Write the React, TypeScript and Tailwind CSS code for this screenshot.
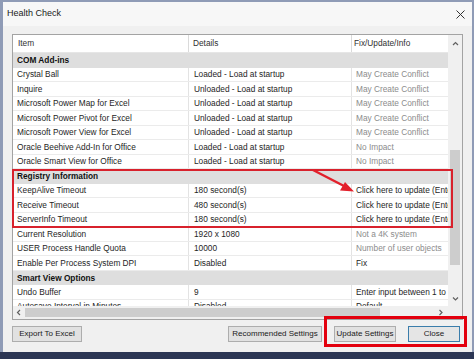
import React from 'react';

type Row =
  | { group: string }
  | { item: string; details: string; fix: string; dim?: boolean };

const ROWS: Row[] = [
  { group: 'COM Add-ins' },
  { item: 'Crystal Ball', details: 'Loaded - Load at startup', fix: 'May Create Conflict', dim: true },
  { item: 'Inquire', details: 'Unloaded - Load at startup', fix: 'May Create Conflict', dim: true },
  { item: 'Microsoft Power Map for Excel', details: 'Unloaded - Load at startup', fix: 'May Create Conflict', dim: true },
  { item: 'Microsoft Power Pivot for Excel', details: 'Unloaded - Load at startup', fix: 'May Create Conflict', dim: true },
  { item: 'Microsoft Power View for Excel', details: 'Unloaded - Load at startup', fix: 'May Create Conflict', dim: true },
  { item: 'Oracle Beehive Add-In for Office', details: 'Loaded - Load at startup', fix: 'No Impact', dim: true },
  { item: 'Oracle Smart View for Office', details: 'Loaded - Load at startup', fix: 'No Impact', dim: true },
  { group: 'Registry Information' },
  { item: 'KeepAlive Timeout', details: '180 second(s)', fix: 'Click here to update (Enter value)' },
  { item: 'Receive Timeout', details: '480 second(s)', fix: 'Click here to update (Enter value)' },
  { item: 'ServerInfo Timeout', details: '180 second(s)', fix: 'Click here to update (Enter value)' },
  { item: 'Current Resolution', details: '1920 x 1080', fix: 'Not a 4K system', dim: true },
  { item: 'USER Process Handle Quota', details: '10000', fix: 'Number of user objects', dim: true },
  { item: 'Enable Per Process System DPI', details: 'Disabled', fix: 'Fix' },
  { group: 'Smart View Options' },
  { item: 'Undo Buffer', details: '9', fix: 'Enter input between 1 to 100' },
  { item: 'Autosave Interval in Minutes', details: 'Disabled', fix: 'Default' },
];

const Chevron = ({ dir }: { dir: 'up' | 'down' | 'left' | 'right' }) => {
  const d = {
    up: 'M1 4 L3.5 1.5 L6 4',
    down: 'M1 1.5 L3.5 4 L6 1.5',
    left: 'M4 1 L1.5 3.5 L4 6',
    right: 'M1.5 1 L4 3.5 L1.5 6',
  }[dir];
  const w = dir === 'up' || dir === 'down' ? 7 : 5.5;
  const h = dir === 'up' || dir === 'down' ? 5.5 : 7;
  return (
    <svg width={w} height={h} viewBox={`0 0 ${w} ${h}`}>
      <path d={d} fill="none" stroke="#606060" strokeWidth="1.2" />
    </svg>
  );
};

export default function App() {
  return (
    <div className="relative w-[474px] h-[359px] overflow-hidden flex flex-col font-['Liberation_Sans',Arial,sans-serif] text-[#1e1e1e]">
      <div className="flex-1 flex flex-col bg-[#f0f0f0] border-t-2 border-l-[3px] border-r-2 border-[#8f9bb6]">
        {/* title */}
        <div className="h-[24px] shrink-0 bg-[#f7f7f7] flex items-center justify-between pl-[4px] pr-[7px]">
          <span className="text-[9px] text-[#202020]">Health Check</span>
          <svg width="9" height="9" viewBox="0 0 9 9">
            <path d="M0.5 0.5 L8.5 8.5 M8.5 0.5 L0.5 8.5" stroke="#333" strokeWidth="1" />
          </svg>
        </div>

        {/* list */}
        <div className="px-[9px] pt-[8px]">
          <div className="h-[286px] border border-[#a3a3a3] bg-white flex flex-col">
            <div className="h-[271px] flex">
              <div className="w-[435px] shrink-0 overflow-hidden text-[8.3px] whitespace-nowrap">
                <div className="h-[18px] flex items-center bg-white border-b border-[#e6e6e6] text-[#303030]">
                  <div className="w-[176px] shrink-0 h-full flex items-center pl-[5px] border-r border-[#dadada]">Item</div>
                  <div className="w-[163px] shrink-0 h-full flex items-center pl-[4px] border-r border-[#dadada]">Details</div>
                  <div className="w-[140px] shrink-0 h-full flex items-center pl-[2px]">Fix/Update/Info</div>
                </div>
                {ROWS.map((r, i) =>
                  'group' in r ? (
                    <div key={i} className="h-[14.5px] flex items-center bg-[#dedede] pl-[4px] font-bold text-[#111]">
                      {r.group}
                    </div>
                  ) : (
                    <div key={i} className="h-[14.5px] flex items-center border-b border-[#ebebeb]">
                      <div className="w-[176px] shrink-0 h-full flex items-center pl-[4px] border-r border-[#e3e3e3]">{r.item}</div>
                      <div className="w-[163px] shrink-0 h-full flex items-center pl-[5px] border-r border-[#e3e3e3]">{r.details}</div>
                      <div className={`w-[140px] shrink-0 h-full flex items-center pl-[4px] ${r.dim ? 'text-[#8c8c8c]' : 'text-[#1e1e1e]'}`}>{r.fix}</div>
                    </div>
                  )
                )}
              </div>
              {/* vertical scrollbar */}
              <div className="w-[14px] bg-[#f0f0f0] flex flex-col">
                <div className="h-[17px] flex items-center justify-center"><Chevron dir="up" /></div>
                <div className="flex-1 pt-[98px] px-[2px]">
                  <div className="h-[115px] bg-[#cdcdcd]" />
                </div>
                <div className="h-[14px] flex items-center justify-center"><Chevron dir="down" /></div>
              </div>
            </div>
            {/* horizontal scrollbar */}
            <div className="h-[13px] flex bg-[#f0f0f0]">
              <div className="w-[435px] flex items-center">
                <div className="w-[12px] flex justify-center"><Chevron dir="left" /></div>
                <div className="w-[355px] h-[9px] bg-[#cdcdcd]" />
                <div className="flex-1" />
                <div className="w-[14px] flex justify-center"><Chevron dir="right" /></div>
              </div>
              <div className="w-[14px]" />
            </div>
          </div>
        </div>

        {/* buttons */}
        <div className="mt-[6px] h-[16px] flex pl-[9px] pr-[12px] text-[8px] text-[#1a1a1a]">
          <button className="w-[70px] h-full bg-[#e1e1e1] border border-[#adadad] flex items-center justify-center">Export To Excel</button>
          <div className="flex-1" />
          <button className="w-[94px] h-full bg-[#e1e1e1] border border-[#adadad] flex items-center justify-center">Recommended Settings</button>
          <button className="ml-[12px] w-[62px] h-full bg-[#e1e1e1] border border-[#adadad] flex items-center justify-center">Update Settings</button>
          <button className="ml-[12px] w-[52px] h-full bg-[#e5e5e5] border border-[#3b7dab] flex items-center justify-center">Close</button>
        </div>
      </div>
      <div className="h-[7px] shrink-0 bg-[#2c3654]" />

      {/* annotations */}
      <div className="absolute left-[12px] top-[169px] w-[441px] h-[59px] border-2 border-[#d8212c] pointer-events-none" />
      <div className="absolute left-[324px] top-[316px] w-[143px] h-[31px] border-[3px] border-[#e3000e] pointer-events-none" />
      <svg className="absolute left-0 top-0 pointer-events-none" width="474" height="359">
        <line x1="313" y1="170" x2="344" y2="186" stroke="#e3202b" strokeWidth="2.5" />
        <polygon points="354,191.5 340,190.5 345,182" fill="#e3202b" />
      </svg>
    </div>
  );
}
